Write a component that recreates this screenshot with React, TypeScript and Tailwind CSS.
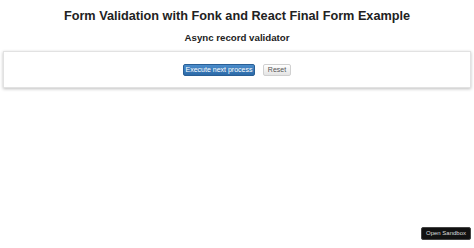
export default function App() {
  return (
    <div className="relative min-h-[248px] bg-white font-['Liberation_Sans',Arial,sans-serif] text-[#222]">
      <h1 className="pt-[9px] text-center text-[12.7px] font-bold leading-[15px]">
        Form Validation with Fonk and React Final Form Example
      </h1>
      <h2 className="mt-[8px] text-center text-[9.7px] font-bold leading-[12px]">
        Async record validator
      </h2>
      <div className="mx-[3px] mt-[7px] flex h-[37px] items-center justify-center gap-[8px] border border-[#e2e2e2] bg-white shadow-[0_1px_3px_rgba(0,0,0,0.25)]">
        <button className="h-[12px] w-[72px] rounded-[2px] border border-[#2a5f95] bg-gradient-to-b from-[#4a8ccb] to-[#2c6aa8] text-[7px] leading-[10px] text-white">
          Execute next process
        </button>
        <button className="h-[12px] w-[28px] rounded-[2px] border border-[#d0d0d0] bg-gradient-to-b from-white to-[#e4e4e4] text-[7px] leading-[10px] text-[#555]">
          Reset
        </button>
      </div>
      <button className="absolute bottom-[8px] right-[3px] h-[13px] w-[50px] rounded-[2px] border border-[#444] bg-[#111] text-[6px] leading-[11px] text-[#ddd]">
        Open Sandbox
      </button>
    </div>
  )
}
